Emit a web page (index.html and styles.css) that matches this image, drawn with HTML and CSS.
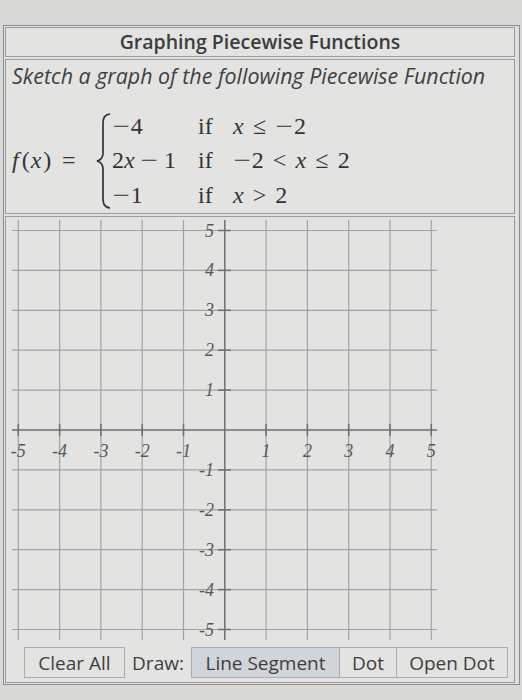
FILE: index.html
```html
<!DOCTYPE html>
<html>
<head>
<meta charset="utf-8">
<link rel="stylesheet" href="styles.css">
</head>
<body>
<div class="page">
  <div class="panel">
    <div class="cell title-cell">Graphing Piecewise Functions</div>
    <div class="cell prompt-cell">
      <div class="prompt">Sketch a graph of the following Piecewise Function</div>
      <div class="formula">
        <div class="lhs"><i class="fn">f</i>(<i class="var">x</i>)<span class="rel">=</span></div>
        <svg class="brace" width="16" height="96" viewBox="0 0 16 96">
          <path d="M14,1 C8,2 7,5 7,12 L7,40 C7,45 5,47 1,48 C5,49 7,51 7,56 L7,84 C7,91 8,94 14,95" fill="none" stroke="#333" stroke-width="1.7"/>
        </svg>
        <div class="cases">
          <span class="c1"><span class="op">−</span>4</span><span class="c2">if</span><span class="c3"><i>x</i><span class="rel">≤</span><span class="op">−</span>2</span>
          <span class="c1">2<i>x</i><span class="bin">−</span>1</span><span class="c2">if</span><span class="c3"><span class="op">−</span>2<span class="rel">&lt;</span><i>x</i><span class="rel">≤</span>2</span>
          <span class="c1"><span class="op">−</span>1</span><span class="c2">if</span><span class="c3"><i>x</i><span class="rel">&gt;</span>2</span>
        </div>
      </div>
    </div>
    <div class="cell graph-cell">
      <svg class="graph" width="510" height="428" viewBox="0 0 510 428">
        <g stroke="#a2a2a2" stroke-width="1.2">
          <line x1="12.3" y1="3" x2="12.3" y2="423"/>
          <line x1="53.6" y1="3" x2="53.6" y2="423"/>
          <line x1="94.9" y1="3" x2="94.9" y2="423"/>
          <line x1="136.2" y1="3" x2="136.2" y2="423"/>
          <line x1="177.5" y1="3" x2="177.5" y2="423"/>
          <line x1="260.1" y1="3" x2="260.1" y2="423"/>
          <line x1="301.4" y1="3" x2="301.4" y2="423"/>
          <line x1="342.7" y1="3" x2="342.7" y2="423"/>
          <line x1="384" y1="3" x2="384" y2="423"/>
          <line x1="425.3" y1="3" x2="425.3" y2="423"/>
          <line x1="6" y1="13.5" x2="431" y2="13.5"/>
          <line x1="6" y1="53.4" x2="431" y2="53.4"/>
          <line x1="6" y1="93.3" x2="431" y2="93.3"/>
          <line x1="6" y1="133.2" x2="431" y2="133.2"/>
          <line x1="6" y1="173.1" x2="431" y2="173.1"/>
          <line x1="6" y1="252.9" x2="431" y2="252.9"/>
          <line x1="6" y1="292.8" x2="431" y2="292.8"/>
          <line x1="6" y1="332.7" x2="431" y2="332.7"/>
          <line x1="6" y1="372.6" x2="431" y2="372.6"/>
          <line x1="6" y1="412.5" x2="431" y2="412.5"/>
        </g>
        <g stroke="#6e6e6e" stroke-width="1.5">
          <line x1="218.8" y1="3" x2="218.8" y2="423"/>
          <line x1="6" y1="213" x2="431" y2="213"/>
          <line x1="212" y1="13.5" x2="225" y2="13.5"/>
          <line x1="212" y1="53.4" x2="225" y2="53.4"/>
          <line x1="212" y1="93.3" x2="225" y2="93.3"/>
          <line x1="212" y1="133.2" x2="225" y2="133.2"/>
          <line x1="212" y1="173.1" x2="225" y2="173.1"/>
          <line x1="212" y1="252.9" x2="225" y2="252.9"/>
          <line x1="212" y1="292.8" x2="225" y2="292.8"/>
          <line x1="212" y1="332.7" x2="225" y2="332.7"/>
          <line x1="212" y1="372.6" x2="225" y2="372.6"/>
          <line x1="212" y1="412.5" x2="225" y2="412.5"/>
          <line x1="12.3" y1="207" x2="12.3" y2="219"/>
          <line x1="53.6" y1="207" x2="53.6" y2="219"/>
          <line x1="94.9" y1="207" x2="94.9" y2="219"/>
          <line x1="136.2" y1="207" x2="136.2" y2="219"/>
          <line x1="177.5" y1="207" x2="177.5" y2="219"/>
          <line x1="260.1" y1="207" x2="260.1" y2="219"/>
          <line x1="301.4" y1="207" x2="301.4" y2="219"/>
          <line x1="342.7" y1="207" x2="342.7" y2="219"/>
          <line x1="384" y1="207" x2="384" y2="219"/>
          <line x1="425.3" y1="207" x2="425.3" y2="219"/>
        </g>
        <g class="ylabels" text-anchor="end">
          <text x="208" y="19.5">5</text>
          <text x="208" y="59.4">4</text>
          <text x="208" y="99.3">3</text>
          <text x="208" y="139.2">2</text>
          <text x="208" y="179.1">1</text>
          <text x="208" y="258.9">-1</text>
          <text x="208" y="298.8">-2</text>
          <text x="208" y="338.7">-3</text>
          <text x="208" y="378.6">-4</text>
          <text x="208" y="418.5">-5</text>
        </g>
        <g class="xlabels" text-anchor="middle">
          <text x="12.3" y="240">-5</text>
          <text x="53.6" y="240">-4</text>
          <text x="94.9" y="240">-3</text>
          <text x="136.2" y="240">-2</text>
          <text x="177.5" y="240">-1</text>
          <text x="260.1" y="240">1</text>
          <text x="301.4" y="240">2</text>
          <text x="342.7" y="240">3</text>
          <text x="384" y="240">4</text>
          <text x="425.3" y="240">5</text>
        </g>
      </svg>
      <div class="toolbar">
        <div class="btn clear">Clear All</div>
        <div class="draw-label">Draw:</div>
        <div class="btn-group">
          <div class="btn seg active">Line Segment</div>
          <div class="btn dot">Dot</div>
          <div class="btn open">Open Dot</div>
        </div>
      </div>
    </div>
  </div>
</div>
</body>
</html>
```

FILE: styles.css
```css
html, body {
  margin: 0;
  padding: 0;
  background: #d8d9d7;
}
.page {
  width: 522px;
  height: 700px;
  padding-top: 25px;
  padding-left: 3px;
  box-sizing: border-box;
  font-family: "Open Sans", Lato, sans-serif;
  color: #3a3a3a;
}
.panel {
  width: 517px;
  box-sizing: border-box;
  border: 1px solid #8c8c8c;
  padding: 1px 4px 1px 1px;
  display: flex;
  flex-direction: column;
  gap: 2px;
  background: #e0e1df;
}
.cell {
  border: 1px solid #9c9c9c;
  box-sizing: border-box;
  background: #e3e4e2;
}
.title-cell {
  height: 30px;
  line-height: 28px;
  text-align: center;
  font-size: 19.5px;
  font-weight: 600;
  color: #3c3c3c;
}
.prompt-cell {
  height: 155px;
  padding: 5px 0 0 6px;
}
.prompt {
  font-style: italic;
  font-size: 21.4px;
  line-height: 22px;
  color: #404040;
}
.formula {
  margin-top: 22px;
  display: flex;
  align-items: center;
  font-family: "Liberation Serif", "DejaVu Serif", serif;
  font-size: 24px;
  color: #333;
}
.lhs {
  width: 82px;
  white-space: nowrap;
}
.fn {
  margin-right: 3px;
}
.var {
  margin: 0 2px 0 1px;
}
.lhs .rel {
  margin-left: 8px;
}
.rel {
  display: inline-block;
  width: 18.7px;
  text-align: center;
  margin: 0 6.5px;
}
.bin {
  display: inline-block;
  width: 18.7px;
  text-align: center;
  margin: 0 5.3px;
  transform: scaleX(1.3);
}
.op {
  display: inline-block;
  width: 18.7px;
  text-align: center;
  transform: scaleX(1.3);
}
.brace {
  display: block;
  margin-left: 2px;
}
.cases {
  display: grid;
  grid-template-columns: 86px 35px auto;
  grid-auto-rows: 34.5px;
  align-items: center;
  white-space: nowrap;
}
.graph-cell {
  height: 467px;
  display: flex;
  flex-direction: column;
}
.graph {
  display: block;
}
.graph text {
  font-family: "Liberation Serif", serif;
  font-style: italic;
  font-size: 18px;
  fill: #585858;
}
.toolbar {
  margin-top: 2px;
  padding-left: 18px;
  display: flex;
  align-items: center;
  height: 31px;
  font-size: 19px;
  color: #3e3e3e;
}
.btn {
  height: 31px;
  box-sizing: border-box;
  border: 1px solid #adadad;
  display: flex;
  align-items: center;
  justify-content: center;
}
.clear {
  width: 101px;
}
.draw-label {
  width: 66px;
  text-align: center;
}
.btn-group {
  display: flex;
}
.seg {
  width: 149px;
  background: #cfd5d8;
}
.dot {
  width: 57px;
  border-left: none;
}
.open {
  width: 111px;
  border-left: none;
}
```
